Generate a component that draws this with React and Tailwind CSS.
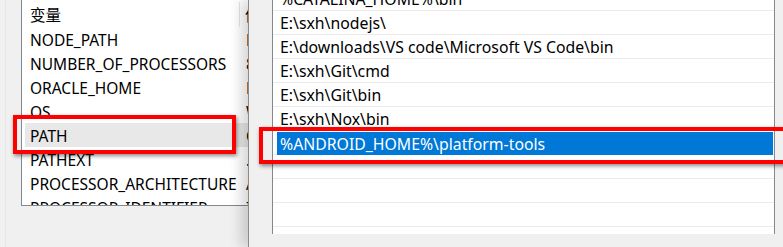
const names = [
  ['NODE_PATH', 'E:\\sxh\\nodejs\\node_global'],
  ['NUMBER_OF_PROCESSORS', '8'],
  ['ORACLE_HOME', 'E:\\oracle\\product'],
  ['OS', 'Windows_NT'],
  ['PATH', 'C:\\Program Files\\Common Files'],
  ['PATHEXT', '.COM;.EXE;.BAT'],
  ['PROCESSOR_ARCHITECTURE', 'AMD64'],
  ['PROCESSOR_IDENTIFIER', 'Intel64 Family 6'],
]

const paths = [
  '%CATALINA_HOME%\\bin',
  'E:\\sxh\\nodejs\\',
  'E:\\downloads\\VS code\\Microsoft VS Code\\bin',
  'E:\\sxh\\Git\\cmd',
  'E:\\sxh\\Git\\bin',
  'E:\\sxh\\Nox\\bin',
  '%ANDROID_HOME%\\platform-tools',
  '',
  '',
  '',
  '',
]

export default function App() {
  return (
    <div
      className="relative flex h-[247px] w-[783px] overflow-hidden bg-[#f0f0f0] text-black"
      style={{ fontFamily: '"Noto Sans", "Noto Sans CJK SC", sans-serif' }}
    >
      {/* environment variable list behind */}
      <div className="relative w-[248px] shrink-0 overflow-hidden pl-[21px] text-[15.5px] leading-[20px]">
        <div className="absolute left-[5px] top-0 h-full w-px bg-[#e6e6e6]" />
        <div className="h-[206px] w-[260px] overflow-hidden border-b border-l border-[#828790] bg-white">
          <div className="flex h-[27px] items-center pt-[2px]">
            <div className="flex h-[25px] w-[218px] shrink-0 items-center border-r border-[#e5e5e5] pl-[8px]">变量</div>
            <div className="pl-[5px]">值</div>
          </div>
          {names.map(([n, v]) => (
            <div
              key={n}
              className={`ml-[3px] flex h-[24px] items-center whitespace-nowrap pt-[2px] ${n === 'PATH' ? 'bg-[#e8e8e8]' : ''}`}
            >
              <div className="w-[220px] shrink-0 overflow-hidden pl-[5px]">{n}</div>
              <div className="pl-[1px]">{v}</div>
            </div>
          ))}
        </div>
      </div>

      {/* edit path dialog */}
      <div className="relative z-10 flex-1 border-l border-[#8a8a8a] bg-[#f0f0f0] pl-[23px] text-[15.8px] leading-[20px] shadow-[-7px_0_12px_rgba(0,0,0,0.16)]">
        <div className="h-full w-[503px] border-x border-[#828790] bg-white">
          <div className="-mt-[13px] flex flex-col">
            {paths.map((p, i) => (
              <div key={i} className="h-[24px] border-b border-[#ebebeb]">
                {i === 6 ? (
                  <div className="ml-[4px] mr-px mt-px flex h-[23px] items-center bg-[#0078d7] pl-[3px] pt-px text-white">{p}</div>
                ) : (
                  <div className="flex h-[23px] items-center whitespace-nowrap pl-[7px] pt-px">{p}</div>
                )}
              </div>
            ))}
          </div>
        </div>
      </div>

      {/* red annotation boxes */}
      <div className="absolute left-[13px] top-[115px] z-20 h-[39px] w-[223px] border-4 border-[#ff0000] shadow-[1px_2px_4px_rgba(0,0,0,0.45)]" />
      <div className="absolute left-[259px] top-[127px] z-20 h-[37px] w-[600px] border-4 border-[#ff0000] shadow-[1px_2px_4px_rgba(0,0,0,0.45)]" />
    </div>
  )
}
